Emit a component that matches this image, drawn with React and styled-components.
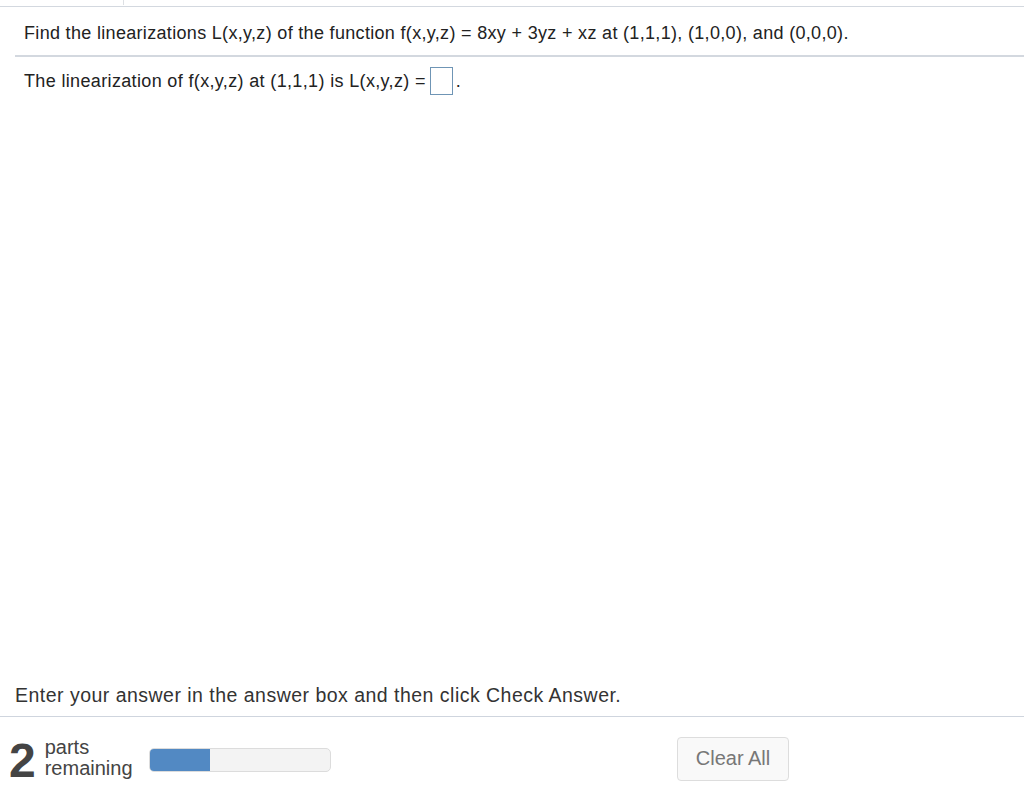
import React from 'react'
import styled, { createGlobalStyle } from 'styled-components'

const Global = createGlobalStyle`
  html, body { margin: 0; padding: 0; background: #fff; }
  body { font-family: "Liberation Sans", Arial, sans-serif; color: #222; }
`

const Page = styled.div`
  width: 1024px;
  height: 800px;
  display: flex;
  flex-direction: column;
  overflow: hidden;
`

const TopRule = styled.div`
  position: relative;
  height: 6px;
  border-bottom: 1px solid #d3d8df;
  &::after {
    content: '';
    position: absolute;
    left: 123px;
    top: 0;
    height: 5px;
    border-left: 1px solid #dde0e4;
  }
`

const Question = styled.div`
  margin-left: 15px;
  padding: 16px 0 0 9px;
  height: 32px;
  font-size: 18px;
  letter-spacing: 0.32px;
  border-bottom: 2px solid #d3d8df;
  white-space: nowrap;
`

const Work = styled.div`
  flex: 1;
  padding: 10px 0 0 24px;
  font-size: 18px;
  letter-spacing: 0.35px;
  display: flex;
  align-items: flex-start;
`

const Line = styled.div`
  display: flex;
  align-items: center;
  white-space: pre;
`

const AnswerBox = styled.span`
  display: inline-block;
  width: 21px;
  height: 26px;
  border: 1px solid #6f95b5;
  margin: 0 3px 0 4px;
`

const Instruction = styled.div`
  padding: 0 0 9px 15px;
  font-size: 19.5px;
  letter-spacing: 0.48px;
  color: #333;
  border-bottom: 1px solid #cfd5de;
`

const Footer = styled.div`
  height: 83px;
  display: flex;
  align-items: center;
  padding: 0 235px 0 9px;
`

const Count = styled.div`
  font-size: 48px;
  font-weight: bold;
  color: #444;
  line-height: 1;
  margin-top: 4px;
`

const CountLabel = styled.div`
  font-size: 20px;
  color: #444;
  line-height: 21px;
  margin-left: 9px;
  margin-top: -1px;
`

const Bar = styled.div`
  width: 180px;
  height: 22px;
  margin-left: 16px;
  margin-top: 2px;
  background: #f3f3f3;
  border: 1px solid #dcdcdc;
  border-radius: 5px;
  overflow: hidden;
  display: flex;
`

const Fill = styled.div`
  background: #5289c3;
  height: 100%;
`

const ClearButton = styled.button`
  margin-left: auto;
  width: 112px;
  height: 44px;
  background: #f9f9f9;
  border: 1px solid #dddddd;
  border-radius: 4px;
  font-family: "Liberation Sans", Arial, sans-serif;
  font-size: 20px;
  color: #777;
`

export default function App() {
  return (
    <Page>
      <Global />
      <TopRule />
      <Question>
        Find the linearizations L(x,y,z) of the function f(x,y,z) = 8xy + 3yz + xz at (1,1,1), (1,0,0), and (0,0,0).
      </Question>
      <Work>
        <Line>
          The linearization of f(x,y,z) at (1,1,1) is L(x,y,z) =<AnswerBox />.
        </Line>
      </Work>
      <Instruction>Enter your answer in the answer box and then click Check Answer.</Instruction>
      <Footer>
        <Count>2</Count>
        <CountLabel>
          parts
          <br />
          remaining
        </CountLabel>
        <Bar>
          <Fill style={{ width: `${(1 / 3) * 100}%` }} />
        </Bar>
        <ClearButton>Clear All</ClearButton>
      </Footer>
    </Page>
  )
}
